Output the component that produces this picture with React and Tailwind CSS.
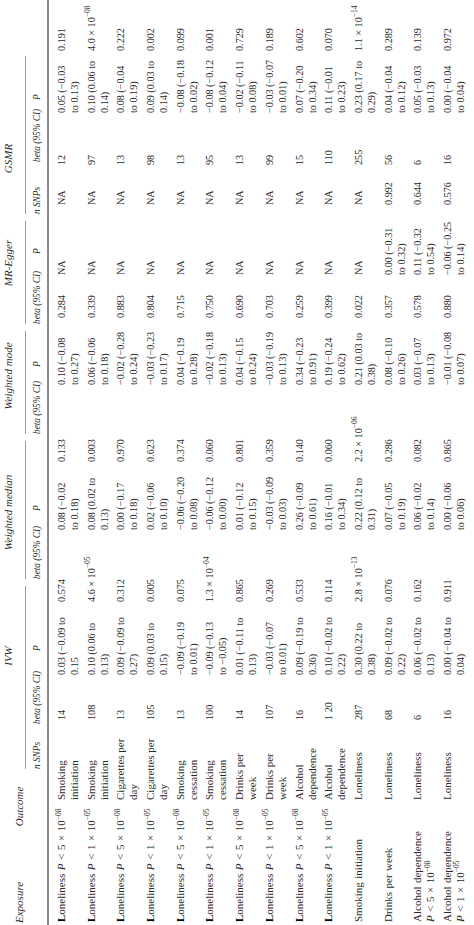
import React from 'react';

// the printed table, stored unrotated: one array per data row, "\n" breaks a cell,
// "^−08" is a superscript and "_P_" an italic P
const ROWS = [
    ['Loneliness _P_ < 5 × 10^−08', 'Smoking\ninitiation', '14', '0.03 (−0.09 to\n0.15', '0.574', '0.08 (−0.02\nto 0.18)', '0.133', '0.10 (−0.08\nto 0.27)', '0.284', 'NA', 'NA', '12', '0.05 (−0.03\nto 0.13)', '0.191'],
    ['Loneliness _P_ < 1 × 10^−05', 'Smoking\ninitiation', '108', '0.10 (0.06 to\n0.13)', '4.6 × 10^−05', '0.08 (0.02 to\n0.13)', '0.003', '0.06 (−0.06\nto 0.18)', '0.339', 'NA', 'NA', '97', '0.10 (0.06 to\n0.14)', '4.0 × 10^−08'],
    ['Loneliness _P_ < 5 × 10^−08', 'Cigarettes per\nday', '13', '0.09 (−0.09 to\n0.27)', '0.312', '0.00 (−0.17\nto 0.18)', '0.970', '−0.02 (−0.28\nto 0.24)', '0.883', 'NA', 'NA', '13', '0.08 (−0.04\nto 0.19)', '0.222'],
    ['Loneliness _P_ < 1 × 10^−05', 'Cigarettes per\nday', '105', '0.09 (0.03 to\n0.15)', '0.005', '0.02 (−0.06\nto 0.10)', '0.623', '−0.03 (−0.23\nto 0.17)', '0.804', 'NA', 'NA', '98', '0.09 (0.03 to\n0.14)', '0.002'],
    ['Loneliness _P_ < 5 × 10^−08', 'Smoking\ncessation', '13', '−0.09 (−0.19\nto 0.01)', '0.075', '−0.06 (−0.20\nto 0.08)', '0.374', '0.04 (−0.19\nto 0.28)', '0.715', 'NA', 'NA', '13', '−0.08 (−0.18\nto 0.02)', '0.099'],
    ['Loneliness _P_ < 1 × 10^−05', 'Smoking\ncessation', '100', '−0.09 (−0.13\nto −0.05)', '1.3 × 10^−04', '−0.06 (−0.12\nto 0.00)', '0.060', '−0.02 (−0.18\nto 0.13)', '0.750', 'NA', 'NA', '95', '−0.08 (−0.12\nto 0.04)', '0.001'],
    ['Loneliness _P_ < 5 × 10^−08', 'Drinks per\nweek', '14', '0.01 (−0.11 to\n0.13)', '0.865', '0.01 (−0.12\nto 0.15)', '0.801', '0.04 (−0.15\nto 0.24)', '0.690', 'NA', 'NA', '13', '−0.02 (−0.11\nto 0.08)', '0.729'],
    ['Loneliness _P_ < 1 × 10^−05', 'Drinks per\nweek', '107', '−0.03 (−0.07\nto 0.01)', '0.269', '−0.03 (−0.09\nto 0.03)', '0.359', '−0.03 (−0.19\nto 0.13)', '0.703', 'NA', 'NA', '99', '−0.03 (−0.07\nto 0.01)', '0.189'],
    ['Loneliness _P_ < 5 × 10^−08', 'Alcohol\ndependence', '16', '0.09 (−0.19 to\n0.36)', '0.533', '0.26 (−0.09\nto 0.61)', '0.140', '0.34 (−0.23\nto 0.91)', '0.259', 'NA', 'NA', '15', '0.07 (−0.20\nto 0.34)', '0.602'],
    ['Loneliness _P_ < 1 × 10^−05', 'Alcohol\ndependence', '1 20', '0.10 (−0.02 to\n0.22)', '0.114', '0.16 (−0.01\nto 0.34)', '0.060', '0.19 (−0.24\nto 0.62)', '0.399', 'NA', 'NA', '110', '0.11 (−0.01\nto 0.23)', '0.070'],
    ['Smoking initiation', 'Loneliness', '287', '0.30 (0.22 to\n0.38)', '2.8 × 10^−13', '0.22 (0.12 to\n0.31)', '2.2 × 10^−06', '0.21 (0.03 to\n0.38)', '0.022', 'NA', 'NA', '255', '0.23 (0.17 to\n0.29)', '1.1 × 10^−14'],
    ['Drinks per week', 'Loneliness', '68', '0.09 (−0.02 to\n0.22)', '0.076', '0.07 (−0.05\nto 0.19)', '0.286', '0.08 (−0.10\nto 0.26)', '0.357', '0.00 (−0.31\nto 0.32)', '0.992', '56', '0.04 (−0.04\nto 0.12)', '0.289'],
    ['Alcohol dependence\n_P_ < 5 × 10^−08', 'Loneliness', '6', '0.06 (−0.02 to\n0.13)', '0.162', '0.06 (−0.02\nto 0.14)', '0.082', '0.03 (−0.07\nto 0.13)', '0.578', '0.11 (−0.32\nto 0.54)', '0.644', '6', '0.05 (−0.03\nto 0.13)', '0.139'],
    ['Alcohol dependence\n_P_ < 1 × 10^−05', 'Loneliness', '16', '0.00 (−0.04 to\n0.04)', '0.911', '0.00 (−0.06\nto 0.06)', '0.865', '−0.01 (−0.08\nto 0.07)', '0.880', '−0.06 (−0.25\nto 0.14)', '0.576', '16', '0.00 (−0.04\nto 0.04)', '0.972'],
];

const GROUPS = [
    { name: 'IVW', w: 'w-[190px]', pad: 'pl-[36px]' },
    { name: 'Weighted median', w: 'w-[145px]', pad: 'pr-[12px]' },
    { name: 'Weighted mode', w: 'w-[110px]', pad: 'pl-[6px]' },
    { name: 'MR-Egger', w: 'w-[110px]', pad: 'pl-[12px]' },
    { name: 'GSMR', w: 'w-[165px]', pad: 'pr-[54px]' },
];

const SUBHEADS = ['n SNPs', 'beta (95% CI)', 'P', 'beta (95% CI)', 'P', 'beta (95% CI)', 'P', 'beta (95% CI)', 'P', 'n SNPs', 'beta (95% CI)', 'P'];

const Line = ({ text, boldL }) => {
    const parts = text.split(/(\^−?\d+|_P_)/);
    return (
        <div className="whitespace-nowrap">
            {parts.map((p, i) => {
                if (p.startsWith('^')) return <sup key={i} className="text-[7.5px] -top-[4.5px]">{p.slice(1)}</sup>;
                if (p === '_P_') return <i key={i}>P</i>;
                if (boldL && i === 0 && p.startsWith('Loneliness')) {
                    return <span key={i}><span className="font-bold text-black">L</span>{p.slice(1)}</span>;
                }
                return <span key={i}>{p}</span>;
            })}
        </div>
    );
};

const cellClass = (c) => {
    if (c === 0) return 'pl-[3px] [word-spacing:0.8px]';
    if (c === 1) return '';
    return 'text-[10.2px]';
};

export default function App() {
    return (
        <div className="w-[474px] h-[925px] overflow-hidden bg-white">
            <div className="w-[925px] h-[474px] origin-top-left [transform:translateY(925px)_rotate(-90deg)] font-['Liberation_Serif',serif] text-[11px] leading-[13px] text-[#2b2b2b]">
                {/* header */}
                <div className="flex h-[49px] border-b-2 border-[#8a8a8a]">
                    <div className="w-[125px] pt-[13px] pl-[2px] italic">Exposure</div>
                    <div className="w-[80px] pt-[13px] pl-[4px] italic">Outcome</div>
                    <div className="flex flex-col">
                        <div className="flex">
                            {GROUPS.map(g => (
                                <div key={g.name} className={`flex flex-col ${g.w}`}>
                                    <div className={`h-[25px] pt-[2px] text-center italic whitespace-nowrap ${g.pad}`}>{g.name}</div>
                                    <div className="h-px mr-[7px] bg-[#9a9a9a]" />
                                </div>
                            ))}
                        </div>
                        <div className="grid grid-cols-[45px_73px_72px_68px_77px_67px_43px_70px_40px_52px_62px_100px] pt-[5px] text-[9.3px]">
                            {SUBHEADS.map((s, i) => (
                                <div key={i} className="italic whitespace-nowrap">{s}</div>
                            ))}
                        </div>
                    </div>
                </div>

                {/* body */}
                <div className="pt-[3px]">
                    {ROWS.map((row, r) => (
                        <div key={r} className="grid grid-cols-[125px_80px_45px_73px_72px_68px_77px_67px_43px_70px_40px_52px_62px_100px] h-[29.7px] pt-[3px]">
                            {row.map((cell, c) => (
                                <div key={c} className={cellClass(c)}>
                                    {cell.split('\n').map((ln, k) => (
                                        <Line key={k} text={ln} boldL={c === 0 && k === 0} />
                                    ))}
                                </div>
                            ))}
                        </div>
                    ))}
                </div>
            </div>
        </div>
    );
}
